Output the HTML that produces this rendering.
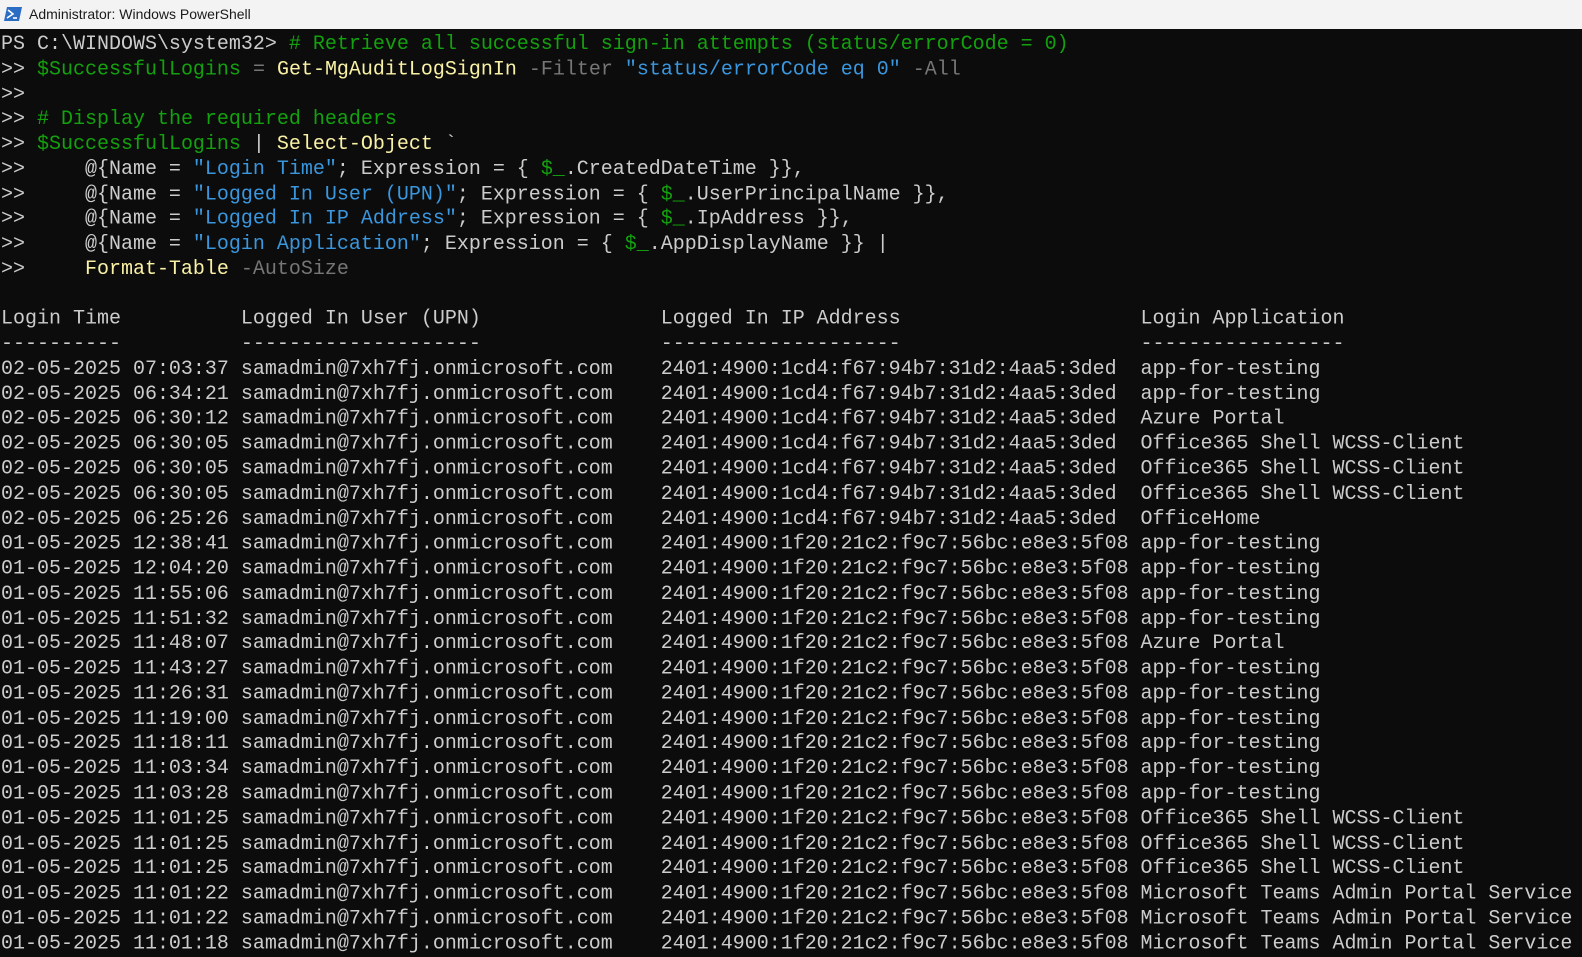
<!DOCTYPE html>
<html><head><meta charset="utf-8"><style>
html,body{margin:0;padding:0;width:1582px;height:957px;overflow:hidden;background:#0c0c0c}
.tb{position:absolute;left:0;top:0;width:1582px;height:29px;background:#f3f3f3;font-family:"Liberation Sans",sans-serif;font-size:14px;color:#1a1a1a}
.tb span{position:absolute;left:29px;top:6px}
.tb svg{position:absolute;left:3px;top:6px}
pre{position:absolute;left:1px;top:31.5px;margin:0;font-family:"Liberation Mono",monospace;font-size:19.77px;line-height:24.77px;color:#cccccc;white-space:pre;transform:scale(1.0113,1.0085);transform-origin:0 0}
.c{color:#13a10e}.v{color:#13a10e}.y{color:#f9f1a5}.s{color:#3a96dd}.p{color:#767676}
</style></head><body>
<div class="tb"><svg width="20" height="16" viewBox="0 0 20 16"><path d="M4 1h15l-3 14H1z" fill="#2b6cc4"/><path d="M5 4l5 4-6 4" stroke="#fff" stroke-width="1.6" fill="none"/><path d="M10 12h4" stroke="#fff" stroke-width="1.6"/></svg><span>Administrator: Windows PowerShell</span></div>
<pre>PS C:\WINDOWS\system32&gt; <span class="c"># Retrieve all successful sign-in attempts (status/errorCode = 0)</span>
&gt;&gt; <span class="v">$SuccessfulLogins</span> <span class="p">=</span> <span class="y">Get-MgAuditLogSignIn</span> <span class="p">-Filter</span> <span class="s">"status/errorCode eq 0"</span> <span class="p">-All</span>
&gt;&gt;
&gt;&gt; <span class="c"># Display the required headers</span>
&gt;&gt; <span class="v">$SuccessfulLogins</span> | <span class="y">Select-Object</span> `
&gt;&gt;     @{Name = <span class="s">"Login Time"</span>; Expression = { <span class="v">$_</span>.CreatedDateTime }},
&gt;&gt;     @{Name = <span class="s">"Logged In User (UPN)"</span>; Expression = { <span class="v">$_</span>.UserPrincipalName }},
&gt;&gt;     @{Name = <span class="s">"Logged In IP Address"</span>; Expression = { <span class="v">$_</span>.IpAddress }},
&gt;&gt;     @{Name = <span class="s">"Login Application"</span>; Expression = { <span class="v">$_</span>.AppDisplayName }} |
&gt;&gt;     <span class="y">Format-Table</span> <span class="p">-AutoSize</span>

Login Time          Logged In User (UPN)               Logged In IP Address                    Login Application
----------          --------------------               --------------------                    -----------------
02-05-2025 07:03:37 samadmin@7xh7fj.onmicrosoft.com    2401:4900:1cd4:f67:94b7:31d2:4aa5:3ded  app-for-testing
02-05-2025 06:34:21 samadmin@7xh7fj.onmicrosoft.com    2401:4900:1cd4:f67:94b7:31d2:4aa5:3ded  app-for-testing
02-05-2025 06:30:12 samadmin@7xh7fj.onmicrosoft.com    2401:4900:1cd4:f67:94b7:31d2:4aa5:3ded  Azure Portal
02-05-2025 06:30:05 samadmin@7xh7fj.onmicrosoft.com    2401:4900:1cd4:f67:94b7:31d2:4aa5:3ded  Office365 Shell WCSS-Client
02-05-2025 06:30:05 samadmin@7xh7fj.onmicrosoft.com    2401:4900:1cd4:f67:94b7:31d2:4aa5:3ded  Office365 Shell WCSS-Client
02-05-2025 06:30:05 samadmin@7xh7fj.onmicrosoft.com    2401:4900:1cd4:f67:94b7:31d2:4aa5:3ded  Office365 Shell WCSS-Client
02-05-2025 06:25:26 samadmin@7xh7fj.onmicrosoft.com    2401:4900:1cd4:f67:94b7:31d2:4aa5:3ded  OfficeHome
01-05-2025 12:38:41 samadmin@7xh7fj.onmicrosoft.com    2401:4900:1f20:21c2:f9c7:56bc:e8e3:5f08 app-for-testing
01-05-2025 12:04:20 samadmin@7xh7fj.onmicrosoft.com    2401:4900:1f20:21c2:f9c7:56bc:e8e3:5f08 app-for-testing
01-05-2025 11:55:06 samadmin@7xh7fj.onmicrosoft.com    2401:4900:1f20:21c2:f9c7:56bc:e8e3:5f08 app-for-testing
01-05-2025 11:51:32 samadmin@7xh7fj.onmicrosoft.com    2401:4900:1f20:21c2:f9c7:56bc:e8e3:5f08 app-for-testing
01-05-2025 11:48:07 samadmin@7xh7fj.onmicrosoft.com    2401:4900:1f20:21c2:f9c7:56bc:e8e3:5f08 Azure Portal
01-05-2025 11:43:27 samadmin@7xh7fj.onmicrosoft.com    2401:4900:1f20:21c2:f9c7:56bc:e8e3:5f08 app-for-testing
01-05-2025 11:26:31 samadmin@7xh7fj.onmicrosoft.com    2401:4900:1f20:21c2:f9c7:56bc:e8e3:5f08 app-for-testing
01-05-2025 11:19:00 samadmin@7xh7fj.onmicrosoft.com    2401:4900:1f20:21c2:f9c7:56bc:e8e3:5f08 app-for-testing
01-05-2025 11:18:11 samadmin@7xh7fj.onmicrosoft.com    2401:4900:1f20:21c2:f9c7:56bc:e8e3:5f08 app-for-testing
01-05-2025 11:03:34 samadmin@7xh7fj.onmicrosoft.com    2401:4900:1f20:21c2:f9c7:56bc:e8e3:5f08 app-for-testing
01-05-2025 11:03:28 samadmin@7xh7fj.onmicrosoft.com    2401:4900:1f20:21c2:f9c7:56bc:e8e3:5f08 app-for-testing
01-05-2025 11:01:25 samadmin@7xh7fj.onmicrosoft.com    2401:4900:1f20:21c2:f9c7:56bc:e8e3:5f08 Office365 Shell WCSS-Client
01-05-2025 11:01:25 samadmin@7xh7fj.onmicrosoft.com    2401:4900:1f20:21c2:f9c7:56bc:e8e3:5f08 Office365 Shell WCSS-Client
01-05-2025 11:01:25 samadmin@7xh7fj.onmicrosoft.com    2401:4900:1f20:21c2:f9c7:56bc:e8e3:5f08 Office365 Shell WCSS-Client
01-05-2025 11:01:22 samadmin@7xh7fj.onmicrosoft.com    2401:4900:1f20:21c2:f9c7:56bc:e8e3:5f08 Microsoft Teams Admin Portal Service
01-05-2025 11:01:22 samadmin@7xh7fj.onmicrosoft.com    2401:4900:1f20:21c2:f9c7:56bc:e8e3:5f08 Microsoft Teams Admin Portal Service
01-05-2025 11:01:18 samadmin@7xh7fj.onmicrosoft.com    2401:4900:1f20:21c2:f9c7:56bc:e8e3:5f08 Microsoft Teams Admin Portal Service</pre>
</body></html>
